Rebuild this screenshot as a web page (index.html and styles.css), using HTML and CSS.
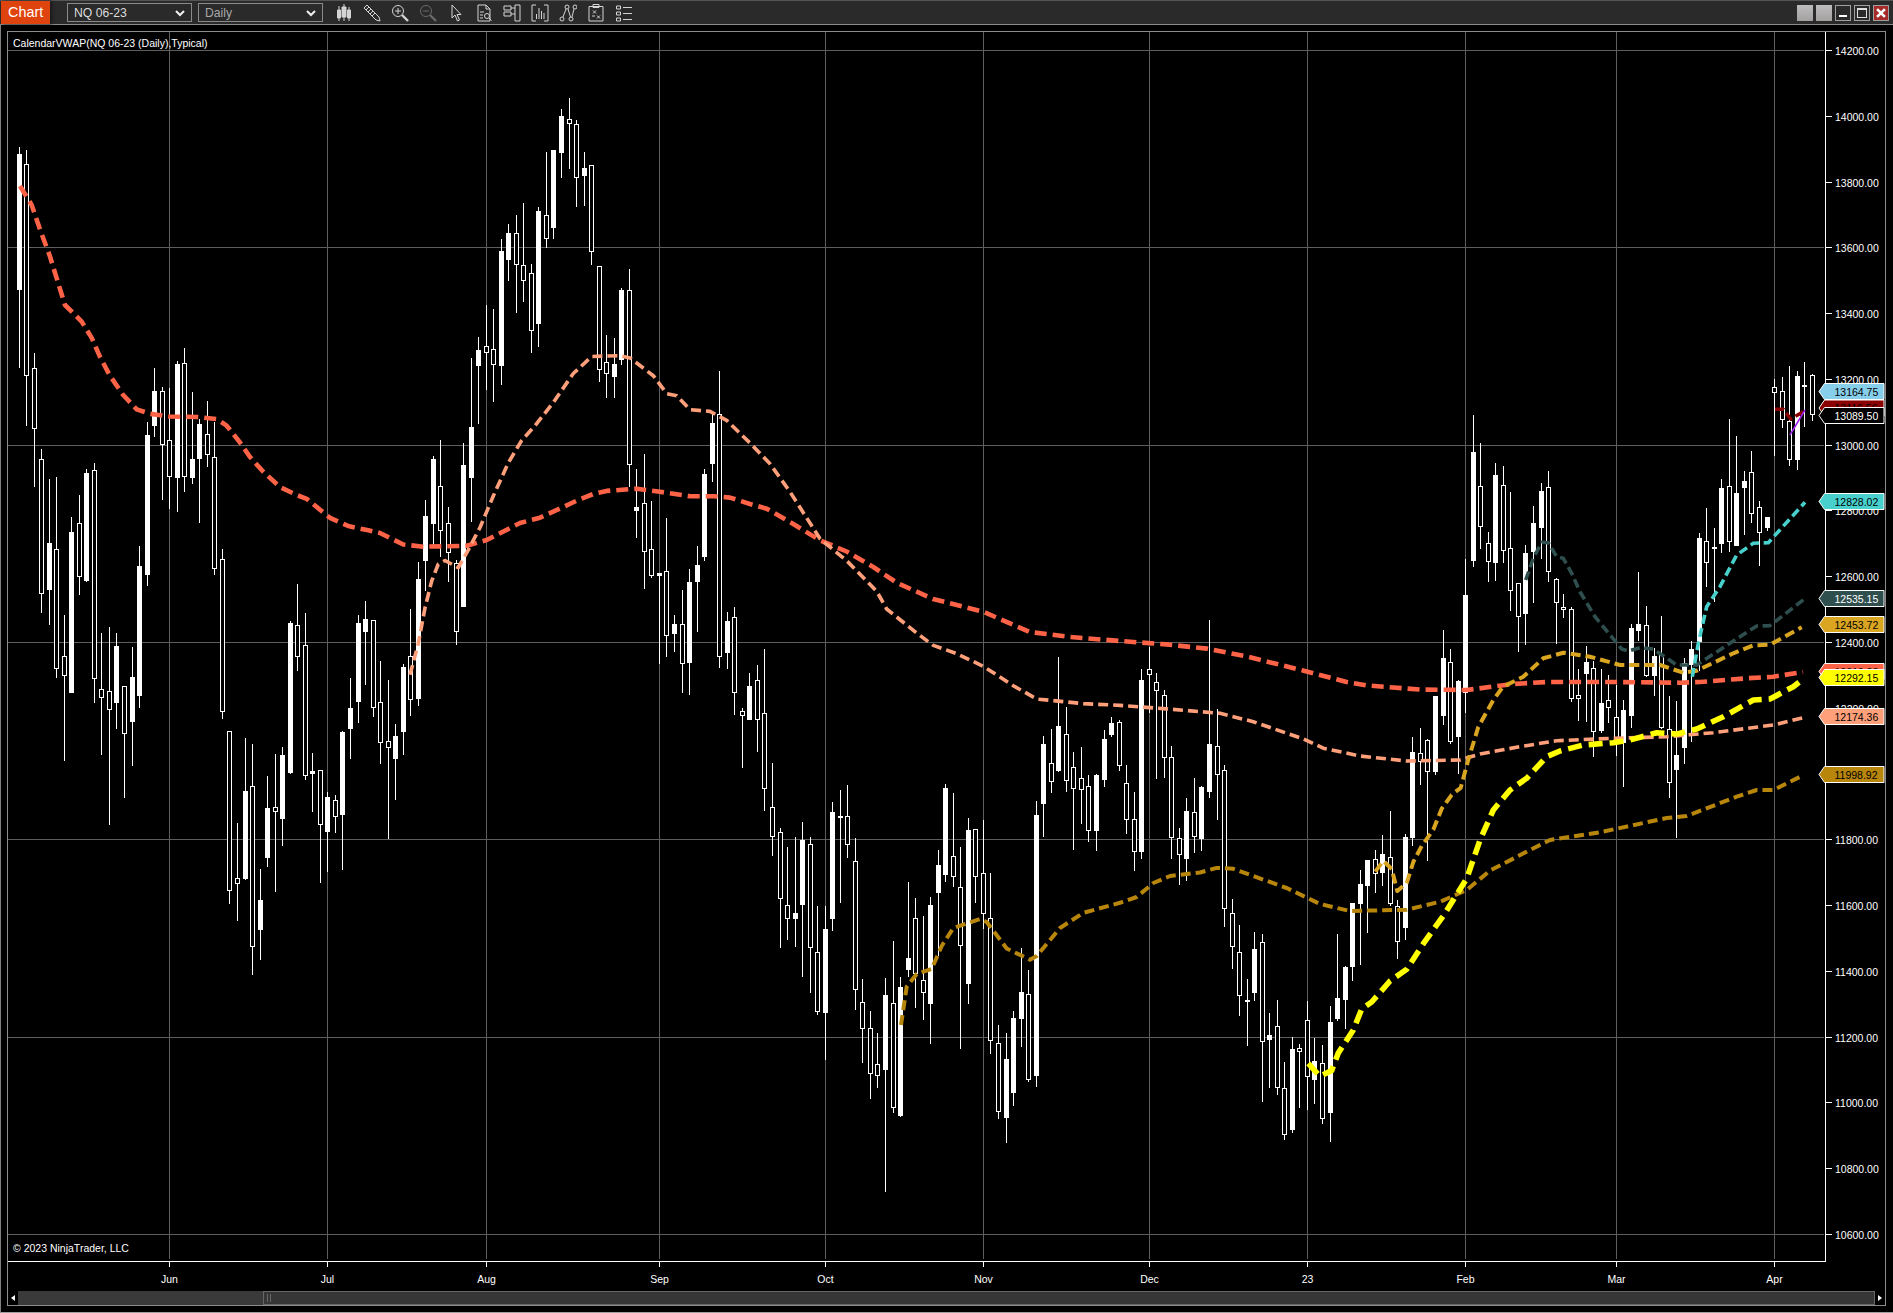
FILE: index.html
```html
<!DOCTYPE html>
<html>
<head>
  <title>Chart</title>
  <link rel="stylesheet" href="styles.css">
</head>
<body>
  <div class="window">
    <div class="toolbar">
      <div class="tab">Chart</div>
      <div class="picker instrument">
        <span>NQ 06-23</span>
        <svg class="chevron" viewBox="0 0 10 8"><path d="M1 2l4 4 4-4"/></svg>
      </div>
      <div class="picker period">
        <span>Daily</span>
        <svg class="chevron" viewBox="0 0 10 8"><path d="M1 2l4 4 4-4"/></svg>
      </div>

      <div class="tools">
        <svg class="tool" viewBox="0 0 18 18"><path d="M4 2v15M9 0v17M14 3v14"/><path class="solid" d="M2.5 6h3v8h-3zM7 3h4v10H7zM12.5 6h3v8h-3z"/></svg>
        <svg class="tool" viewBox="0 0 18 18"><path d="M1 4l3-3 12 12 1 4-4-1zM3 6l3-3M5 8l3-3M7 10l3-3M9 12l3-3"/></svg>
        <svg class="tool" viewBox="0 0 18 18"><circle cx="7" cy="7" r="5.5"/><path d="M4 7h6M7 4v6"/><path class="thick" d="M11 11l6 6"/></svg>
        <svg class="tool dim" viewBox="0 0 18 18"><circle cx="7" cy="7" r="5.5"/><path d="M4 7h6"/><path class="thick" d="M11 11l6 6"/></svg>
        <svg class="tool" viewBox="0 0 18 18"><path d="M5 1v13l3-3 2.5 6 2-1-2.5-5.5h4z"/></svg>
        <svg class="tool" viewBox="0 0 18 18"><path d="M3 1h8l4 4v12H3zM11 1v4h4M5 8h4M5 11h3M5 14h3M14 14l2.5 2.5"/><circle cx="12" cy="12" r="2.5"/></svg>
        <svg class="tool" viewBox="0 0 18 18"><path d="M1 2h7v4H1zM1 8h7v4H1zM12 1h5v16h-5zM8 4h4M8 10h4"/></svg>
        <svg class="tool" viewBox="0 0 18 18"><path d="M5 1H1v16h4M13 1h4v16h-4M5.5 15v-5M8 15V4M10.5 15V7M13 15V9"/></svg>
        <svg class="tool" viewBox="0 0 18 18"><path d="M4 13l3-8M9 5l2.500 8M13 13l2-8"/><circle cx="3" cy="15" r="2"/><circle cx="8" cy="3" r="2"/><circle cx="12" cy="15" r="2"/><circle cx="16" cy="3" r="2"/></svg>
        <svg class="tool" viewBox="0 0 18 18"><path d="M2 2.500h14V17H2zM6 .5h6v3H6zM6 6.500l3 3M9 6.500l-3 3M5 12h3M10 11.500l3 3M13 11.500l-3 3"/></svg>
        <svg class="tool" viewBox="0 0 18 18"><path d="M1.500 2h4v3h-4zM1.500 8h4v3h-4zM1.500 14h4v3h-4zM8 3.500h9M8 9.500h9M8 15.500h9"/></svg>
      </div>

      <div class="window-buttons">
        <div class="win-btn blank"></div>
        <div class="win-btn blank"></div>
        <div class="win-btn minimize"></div>
        <div class="win-btn maximize"></div>
        <div class="win-btn close">
          <svg viewBox="0 0 16 16"><path d="M3.500 3.500l9 9M12.500 3.500l-9 9"/></svg>
        </div>
      </div>
    </div>

    <div class="chart-frame">
      <div class="chart-pane">
        <div class="plot-area">
          <div class="chart-title">CalendarVWAP(NQ 06-23 (Daily),Typical)</div>
          <div class="copyright">© 2023 NinjaTrader, LLC</div>
        </div>
        <svg id="chart" class="chart-svg"></svg>
      </div>

      <div class="scrollbar">
        <div class="scroll-arrow"><span class="tri-left"></span></div>
        <div class="scroll-track"></div>
        <div class="scroll-thumb"><span class="grip"></span></div>
        <div class="scroll-arrow"><span class="tri-right"></span></div>
      </div>
    </div>
  </div>

  <script src="chart.js"></script>
</body>
</html>
```

FILE: styles.css
```css
* {
  box-sizing: border-box;
}

html, body {
  margin: 0;
  height: 100%;
  background-color: #000;
  overflow: hidden;
}

body {
  font-family: "Liberation Sans", Arial, sans-serif;
}

.window {
  height: 1313px;
  display: flex;
  flex-direction: column;
  border-left: 1px solid #808080;
  border-bottom: 1px solid #a0a0a0;
}

/* top bar */
.toolbar {
  height: 25px;
  flex: none;
  display: flex;
  align-items: center;
  background-color: #2a2a2a;
  border-top: 1px solid #555;
  border-bottom: 1px solid #8c8c8c;
  margin-left: -1px;
}

.tab {
  width: 49px;
  height: 23px;
  margin-left: 1px;
  padding-left: 7px;
  line-height: 23px;
  font-size: 14.4px;
  color: #fff;
  background-color: #e0440e;
  box-shadow: 2px 0 3px #1a1a1a;
}

.picker {
  width: 125px;
  height: 19px;
  display: flex;
  align-items: center;
  justify-content: space-between;
  padding: 0 6px;
  border: 1px solid #8a8a8a;
  font-size: 12.2px;
  color: #dcdcdc;
}

.instrument {
  margin-left: 17px;
}

.period {
  margin-left: 6px;
  color: #a8a8a8;
}

.chevron {
  width: 10px;
  height: 8px;
  fill: none;
  stroke: #f0f0f0;
  stroke-width: 2;
}

.tools {
  display: flex;
  gap: 10px;
  margin-left: 12px;
}

.tool {
  width: 18px;
  height: 18px;
  fill: none;
  stroke: #d4d4d4;
  stroke-width: 1;
}

.tool .solid {
  fill: #d4d4d4;
}

.tool .thick {
  stroke-width: 2.4;
}

.tool.dim {
  stroke: #6a6a6a;
}

.window-buttons {
  margin-left: auto;
  margin-right: 4px;
  display: flex;
  gap: 3px;
}

.win-btn {
  width: 16px;
  height: 16px;
  position: relative;
  border: 1px solid #a0a0a0;
}

.win-btn.blank {
  border: none;
  background: linear-gradient(#bdbdbd, #a4a0a0);
}

.minimize::after {
  content: "";
  position: absolute;
  left: 3px;
  right: 3px;
  bottom: 3px;
  height: 2px;
  background-color: #fff;
}

.maximize::after {
  content: "";
  position: absolute;
  left: 2px;
  right: 2px;
  top: 2px;
  bottom: 2px;
  border: 1px solid #ddd;
  border-top-width: 2px;
}

.close {
  background-color: #a52a2a;
}

.close svg {
  display: block;
  width: 14px;
  height: 14px;
  fill: none;
  stroke: #fff;
  stroke-width: 3;
}

/* chart */
.chart-frame {
  width: 1879px;
  height: 1275px;
  margin: 6px 0 0 6px;
  display: flex;
  flex-direction: column;
  border: 1px solid #8c8c8c;
}

.chart-pane {
  flex: 1;
  position: relative;
  padding: 0 59px 29px 0;
}

.plot-area {
  height: 100%;
  position: relative;
  border-right: 1px solid #fff;
  border-bottom: 1px solid #fff;
}

.chart-svg {
  position: absolute;
  left: 0;
  top: 0;
  width: 100%;
  height: 100%;
  overflow: visible;
}

.chart-title,
.copyright {
  position: absolute;
  left: 5px;
  z-index: 1;
  font-size: 10.5px;
  line-height: 12px;
  color: #fff;
}

.chart-title {
  top: 5px;
}

.copyright {
  bottom: 7px;
}

.axis-text {
  font-family: "Liberation Sans", Arial, sans-serif;
  font-size: 10.5px;
  fill: #fff;
}

.tag-text {
  font-family: "Liberation Sans", Arial, sans-serif;
  font-size: 10.5px;
}

/* scrollbar */
.scrollbar {
  height: 14px;
  flex: none;
  display: flex;
  background-color: #3a3a3a;
}

.scroll-arrow {
  width: 10px;
  display: flex;
  align-items: center;
  justify-content: center;
  background-color: #000;
}

.tri-left,
.tri-right {
  border-top: 3px solid transparent;
  border-bottom: 3px solid transparent;
}

.tri-left {
  border-right: 4px solid #fff;
}

.tri-right {
  border-left: 4px solid #fff;
}

.scroll-track {
  width: 245px;
  flex: none;
}

.scroll-thumb {
  flex: 1;
  padding-left: 3px;
  display: flex;
  align-items: center;
  background-color: #363636;
  border: 1px solid #666;
}

.grip {
  width: 4px;
  height: 8px;
  border-left: 1px solid #666;
  border-right: 1px solid #666;
}
```

FILE: chart.js
```js
const NS = "http://www.w3.org/2000/svg";
const svg = document.getElementById("chart");
const layer = document.createElementNS(NS, "g");
layer.setAttribute("transform", "translate(-8 -32)");
svg.appendChild(layer);

function add(name, attrs, text) {
  const el = document.createElementNS(NS, name);
  for (const key in attrs) el.setAttribute(key, attrs[key]);
  if (text) el.textContent = text;
  layer.appendChild(el);
  return el;
}

function box(x, y, w, h, fill) {
  add("rect", { x, y, width: w, height: h, fill, "shape-rendering": "crispEdges" });
}

/* grid */
const months = [
  [169, "Jun"], [327, "Jul"], [486, "Aug"], [659, "Sep"], [825, "Oct"], [983, "Nov"],
  [1149, "Dec"], [1307, "23"], [1465, "Feb"], [1616, "Mar"], [1774, "Apr"]
];

for (let n = 0; n <= 18; n++) {
  const row = Math.round(50 + n * 65.778);
  if (n % 3 === 0) box(8, row, 1816, 1, "#5e5e5e");
  box(1826, row, 6, 1, "#fff");
  const price = (14200 - n * 200).toFixed(2);
  add("text", { class: "axis-text", x: 1835, y: row + 4.5 }, price);
}

months.forEach(([x, label]) => {
  box(x, 32, 1, 1227, "#5e5e5e");
  box(x, 1262, 1, 5, "#fff");
  add("text", { class: "axis-text", x: x + 0.5, y: 1283, "text-anchor": "middle" }, label);
});

/* candles: read off in sections. x, high, low, body top, body bottom, solid */
const sections = [
  { x0: 10, y0: 140, sy: 1.8447, bars: [
    [28,13,420,26,276,1],[49,18,528,44,436,0],[73,393,641,420,534,0],[94,570,873,588,838,0],
    [118,625,894,743,831,1],[139,622,993,755,975,0],[163,876,1145,952,988,0],[184,695,1021,723,1021,1],
    [208,655,840,707,807,0],[229,607,815,614,813,1],[253,596,1039,609,995,0],[274,909,1135,1012,1030,0],
    [298,898,1264,1017,1052,0],[319,910,1087,933,1038,1],[343,1007,1213,1008,1095,0],[367,935,1154,991,1073,1],
    [388,749,1047,786,1025,1],[412,520,822,544,803,1],[433,421,547,463,528,1],[457,456,665,463,563,0],
    [478,457,680,553,621,0],[502,408,687,413,623,1],[523,384,650,411,621,0],[547,465,635,588,623,1],
    [568,515,706,524,589,1],[592,481,604,543,582,0],[613,520,803,584,792,0],[637,754,1069,773,1056,0],
    [658,1090,1410,1091,1385,0],[682,1260,1440,1361,1373,0],[706,1103,1366,1201,1363,1],[727,1114,1541,1191,1488,0],
    [751,1345,1512,1402,1458,1],[772,1173,1342,1232,1325,1],[796,1133,1388,1231,1240,0],[817,1120,1303,1134,1253,1],
    [841,887,1170,891,1167,1],[862,819,980,894,953,0],[886,873,1181,931,1174,0],[907,1131,1240,1164,1170,1],
    [931,1163,1370,1163,1263,0],[952,1203,1351,1212,1276,1],[976,1208,1279,1217,1248,0],[997,1090,1347,1092,1246,1],
    [1021,992,1141,1048,1086,1],[1045,876,1076,891,1036,1],[1066,850,1006,884,907,1],[1090,885,1065,886,1047,0]
  ]},
  { x0: 380, y0: 90, sy: 2.24, bars: [
    [0,1280,1510,1372,1462,0],[25,1322,1678,1459,1473,0],[46,1420,1590,1447,1498,1],[70,1285,1490,1292,1437,1],
    [91,1163,1403,1267,1367,0],[115,1057,1380,1095,1365,1],[136,918,1123,954,1054,1],[160,819,1025,827,973,1],
    [181,784,1045,886,987,0],[205,933,1101,971,1036,0],[229,1052,1244,1060,1215,0],[250,791,1157,840,1157,1],
    [274,600,967,755,870,1],[295,553,749,582,619,1],[319,482,671,574,590,0],[340,491,698,581,617,0],
    [364,334,660,361,619,1],[385,300,427,321,380,1],[409,280,499,321,393,0],[430,253,474,393,427,0],
    [454,390,588,409,539,0],[475,262,575,271,525,1],[499,139,353,281,333,0],[520,134,333,135,308,1],
    [544,43,196,58,140,1],[568,18,177,64,77,0],[589,67,263,77,198,0],[613,139,259,175,192,1],
    [634,169,393,169,364,0],[658,394,655,395,628,0],[679,549,691,610,637,0],[703,556,691,613,642,1],
    [724,444,617,447,604,1],[748,402,890,449,841,0],[769,849,1003,934,942,1],[793,815,1117,926,1034,0],
    [814,921,1094,1029,1088,0],[838,1081,1285,1082,1088,1],[859,959,1269,1078,1222,0],[883,1176,1258,1196,1218,1],
    [907,1120,1350,1197,1285,0],[928,1074,1356,1103,1283,1],[952,1021,1213,1063,1101,1],[973,848,1056,860,1045,1],
    [997,725,877,747,837,1],[1018,629,1294,725,1269,0],[1042,1169,1296,1190,1260,1],[1063,1158,1400,1181,1350,0],
    [1087,1385,1518,1390,1403,0],[1108,1305,1412,1335,1412,1]
  ]},
  { x0: 750, y0: 400, sy: 1.96, bars: [
    [22,519,689,548,628,0],[43,488,805,613,763,0],[67,711,893,797,857,0],[91,838,1075,846,979,0],
    [112,876,1058,989,1018,0],[136,857,1072,1005,1018,1],[157,827,1130,862,990,1],[181,857,1163,871,1075,0],
    [202,992,1206,1081,1199,0],[226,992,1293,1037,1202,1],[247,788,1040,808,1018,1],[271,764,985,816,820,0],
    [292,754,897,816,873,0],[316,858,1195,903,1157,0],[337,1135,1300,1179,1232,0],[361,1198,1371,1230,1322,0],
    [382,1240,1348,1302,1324,0],[406,1132,1553,1166,1313,1],[430,1060,1398,1181,1387,0],[451,1130,1406,1151,1403,1],
    [475,945,1130,1094,1118,1],[496,977,1191,1016,1126,0],[520,1011,1216,1136,1163,0],[541,975,1263,990,1184,1],
    [565,882,1090,911,967,1],[586,752,944,760,931,1],[610,770,954,893,934,0],[631,877,1273,954,1071,0],
    [655,819,1183,843,1145,1],[676,840,985,840,934,0],[700,823,1036,928,1008,0],[721,927,1281,1016,1257,0],
    [745,1225,1410,1261,1396,0],[769,1240,1457,1292,1408,1],[790,1198,1384,1211,1359,1],[814,1075,1268,1160,1213,1],
    [835,1117,1336,1165,1332,0],[859,786,1346,813,1325,1],[880,659,857,674,792,1],[904,645,770,712,748,0],
    [925,503,730,639,727,1],[949,602,768,654,746,0],[970,690,882,720,763,0],[994,680,831,740,765,0],
    [1015,735,866,756,844,0],[1039,733,884,735,845,1],[1063,647,758,664,745,1],[1084,621,661,633,657,1],
    [1108,628,728,631,718,0]
  ]},
  { x0: 1120, y0: 420, sy: 2.148, bars: [
    [19,741,890,779,860,0],[43,799,968,858,929,0],[64,535,944,558,929,1],[88,487,630,534,547,0],
    [109,544,772,562,583,0],[133,580,770,590,727,0],[154,700,942,723,897,0],[178,877,998,897,935,0],
    [199,812,991,840,944,1],[223,769,931,843,895,0],[244,787,925,788,901,1],[268,430,811,696,798,1],
    [292,621,860,701,762,0],[313,741,1090,751,1051,0],[337,1029,1180,1060,1131,0],[358,1085,1281,1142,1238,0],
    [382,1201,1344,1245,1251,0],[403,1100,1248,1136,1230,1],[427,1104,1466,1122,1337,0],[448,1274,1434,1321,1331,1],
    [472,1246,1450,1301,1434,0],[493,1379,1546,1434,1535,0],[517,1325,1532,1352,1526,1],[538,1340,1477,1350,1358,0],
    [562,1248,1483,1288,1411,0],[583,1327,1470,1376,1417,1],[607,1342,1513,1382,1502,0],[631,1259,1550,1293,1488,1],
    [652,1104,1290,1242,1287,1],[676,1173,1309,1175,1245,1],[697,1037,1206,1037,1176,1],[721,967,1170,997,1040,1],
    [742,945,1101,945,1002,1],[766,923,1015,942,976,0],[787,891,1000,932,972,1],[811,840,1045,938,1039,0],
    [832,1031,1157,1043,1122,0],[856,890,1116,896,1092,1],[877,681,916,713,897,1],[901,662,785,716,735,0],
    [922,686,948,687,757,0],[946,592,762,593,757,1],[970,451,656,511,635,1],[991,492,697,519,691,0],
    [1015,559,760,561,680,1],[1036,299,630,376,587,1],[1060,-10,315,69,302,1],[1081,49,278,141,229,0],
    [1105,241,347,265,304,0]
  ]},
  { x0: 1480, y0: 350, sy: 3, bars: [
    [46,340,692,375,638,1],[70,348,638,406,604,0],[91,427,782,595,724,0],[115,700,905,700,802,0],
    [136,586,884,610,791,1],[160,468,758,519,605,1],[184,400,627,423,533,1],[205,364,695,412,667,0],
    [229,685,881,688,760,0],[250,732,803,770,781,0],[274,772,1055,778,1048,0],[295,958,1112,1036,1048,0],
    [319,888,1115,937,971,1],[340,934,1220,955,1147,0],[364,958,1148,1060,1142,1],[385,975,1118,1051,1073,0],
    [409,1005,1217,1102,1170,0],[430,1050,1310,1080,1178,1],[454,823,1133,834,1097,1],[475,666,873,823,842,1],
    [499,768,982,826,977,0],[523,895,1037,918,977,1],[544,798,1137,916,1135,0],[568,1038,1345,1138,1300,0],
    [589,1053,1463,1215,1259,1],[613,923,1241,940,1193,1],[634,873,1177,897,945,1],[658,549,962,564,877,1],
    [679,475,711,574,638,0],[703,534,755,592,594,1],[724,387,608,414,581,1],[748,208,605,409,575,0],
    [769,258,587,430,587,1],[793,364,555,393,413,1],[814,303,518,367,493,0],[838,453,647,472,550,0],
    [862,502,542,502,535,1],[883,87,317,110,130,0],[907,82,233,124,211,0],[928,48,347,214,331,0],
    [952,64,359,79,329,1],[973,36,230,105,107,1],[997,73,212,76,196,0]
  ]}
];

sections.forEach(({ x0, y0, sy, bars }) => {
  bars.forEach(([zx, hi, lo, top, bot, solid]) => {
    const x = Math.floor(x0 + zx / 3);
    const yHi = Math.round(y0 + hi / sy);
    const yLo = Math.round(y0 + lo / sy);
    const yTop = Math.round(y0 + top / sy);
    const yBot = Math.round(y0 + bot / sy);
    box(x, yHi, 1, yLo - yHi, "#fff");
    box(x - 2, yTop, 5, Math.max(yBot - yTop, 2), "#fff");
    if (!solid && yBot - yTop > 2) box(x - 1, yTop + 1, 3, yBot - yTop - 2, "#000");
  });
});

/* calendar VWAP lines */
const lines = [
  { color: "#ff6347", width: 4.6, dash: "12 6", pts: "20,186 31.7,205 40,229.4 50,256.5 58.3,283.6 65,305 81.7,321.6 91.7,337.9 100,356.8 110,375.8 123,394.8 136.7,409.4 150,413.8 170,416.5 196.7,417 216.7,419 226.7,425.7 240,442.5 250,457 263.3,471.800 280,487 296.7,495 306.7,498.9 330,517.8 348.3,526 368.3,530.3 380,533 403.3,544.5 423.3,546.7 466.7,545.8 486.7,540 520,523 540,517.7 576.7,500.7 593.3,494 606.7,490.9 636.7,488.7 660,491.8 690,496.2 713.3,496.2 730,497.6 750,504 766.7,508.7 793.3,524 820,540.3 846.7,551.5 873.3,567 896.7,582.7 933,599 983.3,611.7 1003,620.4 1030,632 1070,637 1120,641 1166.7,644.4 1206.7,648.6 1246.7,656.5 1303,670.5 1346.7,682 1366.7,685.4 1420,689.6 1466.7,690 1513,684 1546.7,682 1613,682 1680,682.7 1700,682 1746.7,678.3 1773.3,676.7 1803,672" },
  { color: "#ffa07a", width: 3.6, dash: "10 5", pts: "410,674.8 418.3,643.6 425,607.9 431.7,581 438.3,564 445,560.5 458.3,567.7 468.3,549.8 480,527.5 493.3,496 508.3,462.8 521.7,440.4 535,425.7 553.3,402.5 573.3,373.5 591.7,356.5 620,355.6 630,357.9 653.3,375.7 666.7,393.6 676.7,395.8 690,409.6 710,411.4 726.7,420.4 750,443 770,463.8 790,491.8 820,538.8 846.7,560.7 876.7,591.3 886.7,609 916.7,633 933.3,645.4 956.7,653.6 983.3,666.3 1013.3,685.7 1036.7,699 1083.3,703.6 1120,705.4 1163.3,708.6 1220,713.3 1253.3,721.7 1303.3,738.9 1323.3,748.2 1360,756 1406.7,761 1460,760 1480,754 1520,746.7 1556.7,740.7 1613.3,738.3 1666.7,736.7 1713.3,732.7 1773.3,725 1803.3,717.7" },
  { color: "#b8860b", width: 4, dash: "10 5", pts: "901,1025 906.7,986.7 916.7,974 931.7,969 941.7,946 953.3,928 980,919 986.7,922 1006.7,948.5 1030,959.7 1036.7,956 1060,928 1083.3,912.8 1120,902.8 1136.7,897 1153.3,883 1170,876 1200,872.5 1216.7,867.9 1233.3,868.8 1286.7,888 1320,904 1350,911 1406.7,909.7 1440,901.8 1466.7,890 1490,870.6 1530,850 1550,840 1600,832.3 1666.7,818 1686.7,816 1736.7,796.7 1756.7,790 1773.3,790 1803.3,775.3" },
  { color: "#daa520", width: 4, dash: "10 5", pts: "1375.3,871.6 1383.3,860.9 1391.7,869 1397.3,891 1406.7,883 1413.3,862 1421.7,846 1433.3,829.7 1441.7,808.7 1451.7,794.8 1460.7,787.8 1468.3,759.8 1478.3,727 1493.3,700 1503,686.7 1523.3,676.7 1543.3,658.3 1563.3,652.7 1590,656.7 1620,665 1660,665 1683.3,672.7 1696.7,670.7 1733.3,653.3 1753.3,645.3 1770,644.7 1801.7,627.3" },
  { color: "#2f4f4f", width: 3.6, dash: "9 4.5", pts: "1525.7,580 1533.3,558.3 1541.7,542.3 1548.3,542.7 1556.7,556.7 1563.3,558.3 1571.7,573.3 1580,591.7 1595,616.7 1621.7,649 1628.3,651 1640,647.7 1653.3,649 1676.7,665 1696.7,665 1740,636.7 1756.7,626 1770,625.7 1804,599.3" },
  { color: "#48d1cc", width: 3.6, dash: "9 4.5", pts: "1692.3,676.7 1698.3,643.3 1706.7,606.7 1720,586.7 1736.7,555 1753.3,543.3 1768.3,542.7 1805,502.3" },
  { color: "#ffff00", width: 5.6, dash: "14 7", pts: "1308.3,1063.4 1320,1076.4 1331.7,1070.4 1338.3,1053 1353.3,1030 1361.7,1009 1371.7,1002 1390,981 1400,974 1406.7,969.3 1423.3,943.7 1443.3,915.8 1466.7,878.6 1480,840 1493.3,810 1510,790 1526.7,778.3 1546.7,756.7 1560,751 1583.3,745 1613.3,742.7 1630,740 1656.7,732.7 1676.7,734 1696.7,729 1723.3,716.7 1753.3,700 1770,699 1793.3,686.7 1804,678.3" },
  { color: "#8b0000", width: 3.6, dash: "9 4", pts: "1775,409.3 1783.3,409.3 1790.7,419 1805,410.7" },
  { color: "#a020f0", width: 1.5, dash: "none", pts: "1790,435 1805,410" }
];

lines.forEach(line => {
  add("polyline", {
    points: line.pts,
    fill: "none",
    stroke: line.color,
    "stroke-width": line.width,
    "stroke-dasharray": line.dash,
    "stroke-linejoin": "round"
  });
});

/* price markers on the axis, drawn in this order */
const tags = [
  ["13164.75", 391.5, "#87ceeb", "#000"],
  ["13116.56", 408, "#8b0000", "#000"],
  ["13089.50", 415.5, "#000", "#fff"],
  ["12828.02", 501.5, "#48d1cc", "#000"],
  ["12535.15", 598.5, "#2f4f4f", "#fff"],
  ["12453.72", 624.5, "#daa520", "#000"],
  ["12310.38", 671.5, "#ff6347", "#000"],
  ["12292.15", 677.5, "#ffff00", "#000"],
  ["12174.36", 716.5, "#ffa07a", "#000"],
  ["11998.92", 774.5, "#b8860b", "#000"]
];

tags.forEach(([text, y, fill, color]) => {
  add("polygon", {
    points: `1819,${y} 1824.500,${y - 8} 1884,${y - 8} 1884,${y + 8} 1824.500,${y + 8}`,
    fill,
    stroke: "#fff",
    "stroke-width": 1
  });
  add("text", { class: "tag-text", x: 1834.5, y: y + 4, fill: color }, text);
});
```
